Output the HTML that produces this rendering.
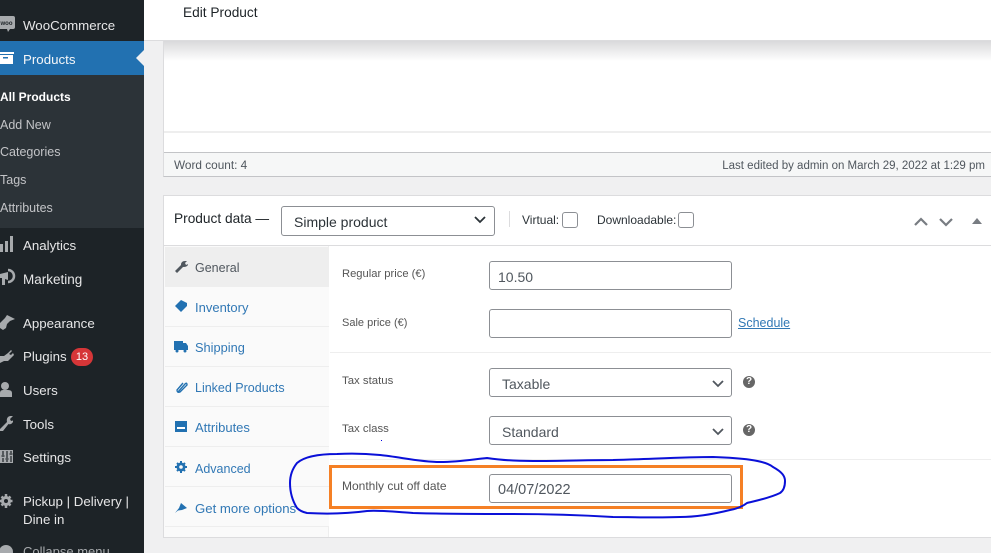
<!DOCTYPE html>
<html><head><meta charset="utf-8"><style>
html,body{margin:0;padding:0;width:991px;height:553px;overflow:hidden}
#p{width:991px;height:553px;position:relative;overflow:hidden;background:#f0f0f1;font-family:"Liberation Sans",sans-serif;color:#3c434a;filter:blur(.3px)}
.a{position:absolute}
.t{position:absolute;white-space:nowrap;line-height:18px}
.m{font-size:13.300px;color:#e6e6e7;left:23px}
.s{font-size:12.500px;color:#c3c4c7;left:0}
.tab{position:absolute;left:165px;width:164px;height:39px;background:#fafafa;border-bottom:1px solid #eee}
.tl{font-size:12.600px;color:#3178b5;left:195px}
.lb{font-size:11.400px;color:#555;left:342px}
.in{position:absolute;left:489px;width:241px;height:27px;border:1px solid #8c8f94;border-radius:3px;background:#fff;font-size:14px;color:#50575e;line-height:30px;box-sizing:content-box}
.ck{position:absolute;width:14px;height:14px;border:1px solid #8c8f94;border-radius:3px;background:#fff}
svg{position:absolute;overflow:visible}
.ic{fill:#a7aaad}
.ti{fill:#2271b1}
</style></head><body><div id="p">

<div class="a" style="left:0;top:0;width:144px;height:553px;background:#1d2327"></div>
<div class="a" style="left:0;top:41px;width:144px;height:34px;background:#2271b1"></div>
<div class="a" style="left:0;top:75px;width:144px;height:153px;background:#2c3338"></div>
<svg style="left:136px;top:50px" width="8" height="16"><path d="M8 0L0 8L8 16Z" fill="#f0f0f1"/></svg>

<svg style="left:0;top:14px" width="16" height="20"><path class="ic" d="M0 2H13Q15 2 15 4V13Q15 15 13 15H10L8 18L7 15H0Z"/><text x="0.5" y="11" font-size="6" font-family="Liberation Sans" fill="#1d2327" font-weight="bold">woo</text></svg>
<div class="t m" style="top:17px">WooCommerce</div>
<svg style="left:0;top:51px" width="14" height="14"><path d="M0 1H14V3H0ZM0 4H13V13H0Z" fill="#fff"/><path d="M3 6H8V7.500H3Z" fill="#2271b1"/></svg>
<div class="t m" style="top:51px;color:#f4f6f8">Products</div>
<div class="t s" style="top:88px;color:#fff;font-weight:bold;font-size:12px">All Products</div>
<div class="t s" style="top:116px">Add New</div>
<div class="t s" style="top:143px">Categories</div>
<div class="t s" style="top:171px">Tags</div>
<div class="t s" style="top:199px">Attributes</div>

<svg style="left:0;top:236px" width="14" height="17"><path class="ic" d="M0 8H3V16H0ZM5 5H8V16H5ZM10 0H13V16H10Z"/></svg>
<div class="t m" style="top:237px">Analytics</div>
<svg style="left:0;top:269px" width="15" height="18"><path class="ic" d="M0 5L8 3V11L5 10V16H2V9H0Z"/><path d="M8 1A6 6 0 1 1 8 13" fill="none" stroke="#a7aaad" stroke-width="2.500"/></svg>
<div class="t m" style="top:271px;font-size:13.500px">Marketing</div>
<svg style="left:0;top:314px" width="15" height="17"><path class="ic" d="M0 9L5 4L7 1L15 5L10 7L7 10L6 14L3 16L0 14Z"/></svg>
<div class="t m" style="top:315px">Appearance</div>
<svg style="left:0;top:348px" width="14" height="17"><path class="ic" d="M0 8H4L8 5L11 2L12 3L9 6L11 7L13 5L14 7L11 10L8 13H4L0 15Z"/></svg>
<div class="t m" style="top:348px">Plugins</div>
<div class="a" style="left:71px;top:348px;width:22px;height:18px;border-radius:9px;background:#d63638;color:#fff;font-size:11px;line-height:18px;text-align:center">13</div>
<svg style="left:0;top:381px" width="13" height="17"><circle class="ic" cx="5" cy="5" r="4"/><path class="ic" d="M0 16V12Q0 9 3 9H8Q12 9 12 12V16Z"/></svg>
<div class="t m" style="top:382px">Users</div>
<svg style="left:0;top:415px" width="14" height="17"><path class="ic" d="M0 14L7 7Q6 2 10 1L13 1L10 4L11 6L13 5.500L13 7Q11 10 8.500 9L3 16H0Z"/></svg>
<div class="t m" style="top:416px">Tools</div>
<svg style="left:0;top:449px" width="13" height="16"><path class="ic" d="M0 1H13V14H0Z"/><path d="M3 2V6M1.500 7H4.500M3 9V13M7 2V9M5.500 10H8.500M7 11V13M11 2V4M9.500 5H12.500M11 7V13" stroke="#1d2327" stroke-width="1.200" fill="none"/></svg>
<div class="t m" style="top:449px">Settings</div>
<svg style="left:0;top:493px" width="14" height="16"><path d="M6 1V15M0 8H12.500M1.500 3.500L10.500 12.500M10.500 3.500L1.500 12.500" stroke="#a7aaad" stroke-width="2.500"/><circle cx="6" cy="8" r="5" fill="#a7aaad"/><circle cx="6" cy="8" r="2" fill="#1d2327"/></svg>
<div class="t m" style="top:493px">Pickup | Delivery |</div>
<div class="t m" style="top:511px">Dine in</div>
<svg style="left:0;top:544px" width="14" height="14"><circle class="ic" cx="6" cy="8" r="7"/></svg>
<div class="t" style="left:23px;top:543px;font-size:13px;color:#a7aaad">Collapse menu</div>

<div class="a" style="left:144px;top:0;width:847px;height:40px;background:#fff;border-bottom:1px solid #dcdcde"></div>
<div class="t" style="left:183px;top:4px;font-size:13.700px;color:#1d2327">Edit Product</div>

<div class="a" style="left:163px;top:41px;width:828px;height:135px;background:#fff;border-left:1px solid #dcdcde;border-bottom:1px solid #c3c4c7"></div>
<div class="a" style="left:164px;top:41px;width:827px;height:20px;background:linear-gradient(#d9d9db,#fff)"></div>
<div class="a" style="left:164px;top:131px;width:827px;height:2px;background:#eeeeee"></div>
<div class="a" style="left:164px;top:152px;width:827px;height:23px;background:#f6f7f7;border-top:1px solid #c3c4c7"></div>
<div class="t" style="left:174px;top:156px;font-size:11.800px;color:#50575e">Word count: 4</div>
<div class="t" style="right:6px;top:157px;font-size:11.500px;color:#50575e">Last edited by admin on March 29, 2022 at 1:29 pm</div>

<div class="a" style="left:163px;top:195px;width:828px;height:343px;background:#fff;border:1px solid #dcdcde;border-right:0;box-sizing:border-box"></div>
<div class="a" style="left:164px;top:245px;width:827px;height:1px;background:#dcdcde"></div>
<div class="t" style="left:174px;top:210px;font-size:13.700px;color:#1d2327">Product data —</div>
<div class="a" style="left:281px;top:206px;width:212px;height:28px;border:1px solid #8c8f94;border-radius:3px;background:#fff"></div>
<div class="t" style="left:294px;top:213px;font-size:14px;color:#2c3338">Simple product</div>
<svg style="left:474px;top:216px" width="12" height="8"><path d="M1 1L6 6L11 1" fill="none" stroke="#2c3338" stroke-width="1.800"/></svg>
<div class="a" style="left:509px;top:211px;width:1px;height:16px;background:#dcdcde"></div>
<div class="t" style="left:522px;top:211px;font-size:12px;color:#2c3338">Virtual:</div>
<div class="ck" style="left:562px;top:212px"></div>
<div class="t" style="left:597px;top:211px;font-size:12px;color:#2c3338">Downloadable:</div>
<div class="ck" style="left:678px;top:212px"></div>
<svg style="left:913px;top:216px" width="70" height="12"><path d="M2 9L8 3L14 9M27 3L33 9L39 3" fill="none" stroke="#787c82" stroke-width="2.200"/><path d="M59 8L64 2L69 8Z" fill="#787c82"/></svg>

<div class="a" style="left:164px;top:246px;width:165px;height:291px;background:#fafafa;border-right:1px solid #eee;box-sizing:border-box"></div>
<div class="tab" style="top:247px;background:#eee;border:0;height:40px"></div>
<div class="tab" style="top:287px"></div>
<div class="tab" style="top:327px"></div>
<div class="tab" style="top:367px"></div>
<div class="tab" style="top:407px"></div>
<div class="tab" style="top:447px"></div>
<div class="tab" style="top:487px"></div>

<svg style="left:175px;top:260px" width="14" height="13"><path d="M0 11L6 5Q6 1 10 1L12 1L10 3L11 5L13 4Q13 7 8 7L2 13Z" fill="#50575e"/></svg>
<div class="t" style="left:195px;top:259px;font-size:12.500px;color:#50575e">General</div>
<svg style="left:175px;top:300px" width="13" height="13"><path class="ti" d="M0 6L6 0L12 3L12 6L6 12Z"/></svg>
<div class="t tl" style="top:299px;font-size:13px">Inventory</div>
<svg style="left:174px;top:341px" width="14" height="11"><path class="ti" d="M0 0H9V2H12L14 5V9H0Z"/><circle cx="3" cy="10" r="1.500" fill="#2271b1"/><circle cx="11" cy="10" r="1.500" fill="#2271b1"/></svg>
<div class="t tl" style="top:339px;font-size:12.800px">Shipping</div>
<svg style="left:175px;top:381px" width="13" height="13"><path d="M3 11L10 3Q12 1 12 4L5 11Q2 12 2 9L8 2" fill="none" stroke="#2271b1" stroke-width="1.400"/></svg>
<div class="t tl" style="top:379px;font-size:12.500px">Linked Products</div>
<svg style="left:175px;top:421px" width="12" height="11"><path class="ti" d="M0 0H12V11H0Z"/><path d="M2 6H10V8H2Z" fill="#fff"/></svg>
<div class="t tl" style="top:419px;font-size:13px">Attributes</div>
<svg style="left:175px;top:461px" width="12" height="12"><path d="M6 0V12M0 6H12M2 2L10 10M10 2L2 10" stroke="#2271b1" stroke-width="2"/><circle cx="6" cy="6" r="4.500" fill="#2271b1"/><circle cx="6" cy="6" r="1.800" fill="#fafafa"/></svg>
<div class="t tl" style="top:460px;font-size:12.500px">Advanced</div>
<svg style="left:175px;top:502px" width="13" height="12"><path class="ti" d="M0 11L4 6L6 1L12 6L7 8L3 8.500Z"/></svg>
<div class="t tl" style="top:500px;font-size:13.200px">Get more options</div>

<div class="a" style="left:330px;top:352px;width:661px;height:1px;background:#eee"></div>
<div class="a" style="left:330px;top:459px;width:661px;height:1px;background:#eee"></div>

<div class="t lb" style="top:265px;font-size:11.200px">Regular price (€)</div>
<div class="in" style="top:261px;text-indent:8px">10.50</div>
<div class="t lb" style="top:314px;font-size:11px">Sale price (€)</div>
<div class="in" style="top:309px"></div>
<div class="t" style="left:738px;top:314px;font-size:12.500px;color:#3178b5;text-decoration:underline">Schedule</div>
<div class="t lb" style="top:372px">Tax status</div>
<div class="in" style="top:368px;text-indent:12px">Taxable</div>
<div class="t lb" style="top:420px">Tax class</div>
<div class="in" style="top:416px;text-indent:12px">Standard</div>
<svg style="left:712px;top:380px" width="12" height="8"><path d="M1 1L6 6L11 1" fill="none" stroke="#50575e" stroke-width="1.800"/></svg>
<svg style="left:712px;top:428px" width="12" height="8"><path d="M1 1L6 6L11 1" fill="none" stroke="#50575e" stroke-width="1.800"/></svg>
<div class="a" style="left:743px;top:376px;width:12px;height:12px;border-radius:50%;background:#666;color:#fff;font-size:10px;font-weight:bold;line-height:12px;text-align:center">?</div>
<div class="a" style="left:743px;top:424px;width:12px;height:12px;border-radius:50%;background:#666;color:#fff;font-size:10px;font-weight:bold;line-height:12px;text-align:center">?</div>
<div class="a" style="left:381px;top:440px;width:1px;height:1px;background:#0000e0"></div>

<div class="t lb" style="top:477px;font-size:12px">Monthly cut off date</div>
<div class="in" style="top:474px;text-indent:8px;line-height:31px;font-size:14.500px">04/07/2022</div>
<div class="a" style="left:329px;top:465px;width:414px;height:44px;border:3px solid #f58025;box-sizing:border-box"></div>
<svg style="left:0;top:0" width="991" height="553"><path d="M297 463C305 456 320 454 337 454C355 453 370 454 380 455C400 457 420 462 440 462C460 462 475 459 487 458C500 460 515 461 533 461C560 461 590 460 613 460C650 459 685 457 713 457C740 458 765 460 773 467C782 472 785 476 785 481C785 487 783 491 780 493C770 498 755 501 747 503C742 507 735 509 730 510C710 515 695 517 680 517C655 518 635 517 613 517C580 515 545 514 513 514C480 514 445 514 413 513C395 512 380 510 367 511C345 514 325 514 307 513C302 512 299 510 297 508C292 500 290 492 290 483C290 474 293 468 297 463Z" fill="none" stroke="#0a10d8" stroke-width="2"/></svg>
</div></body></html>
